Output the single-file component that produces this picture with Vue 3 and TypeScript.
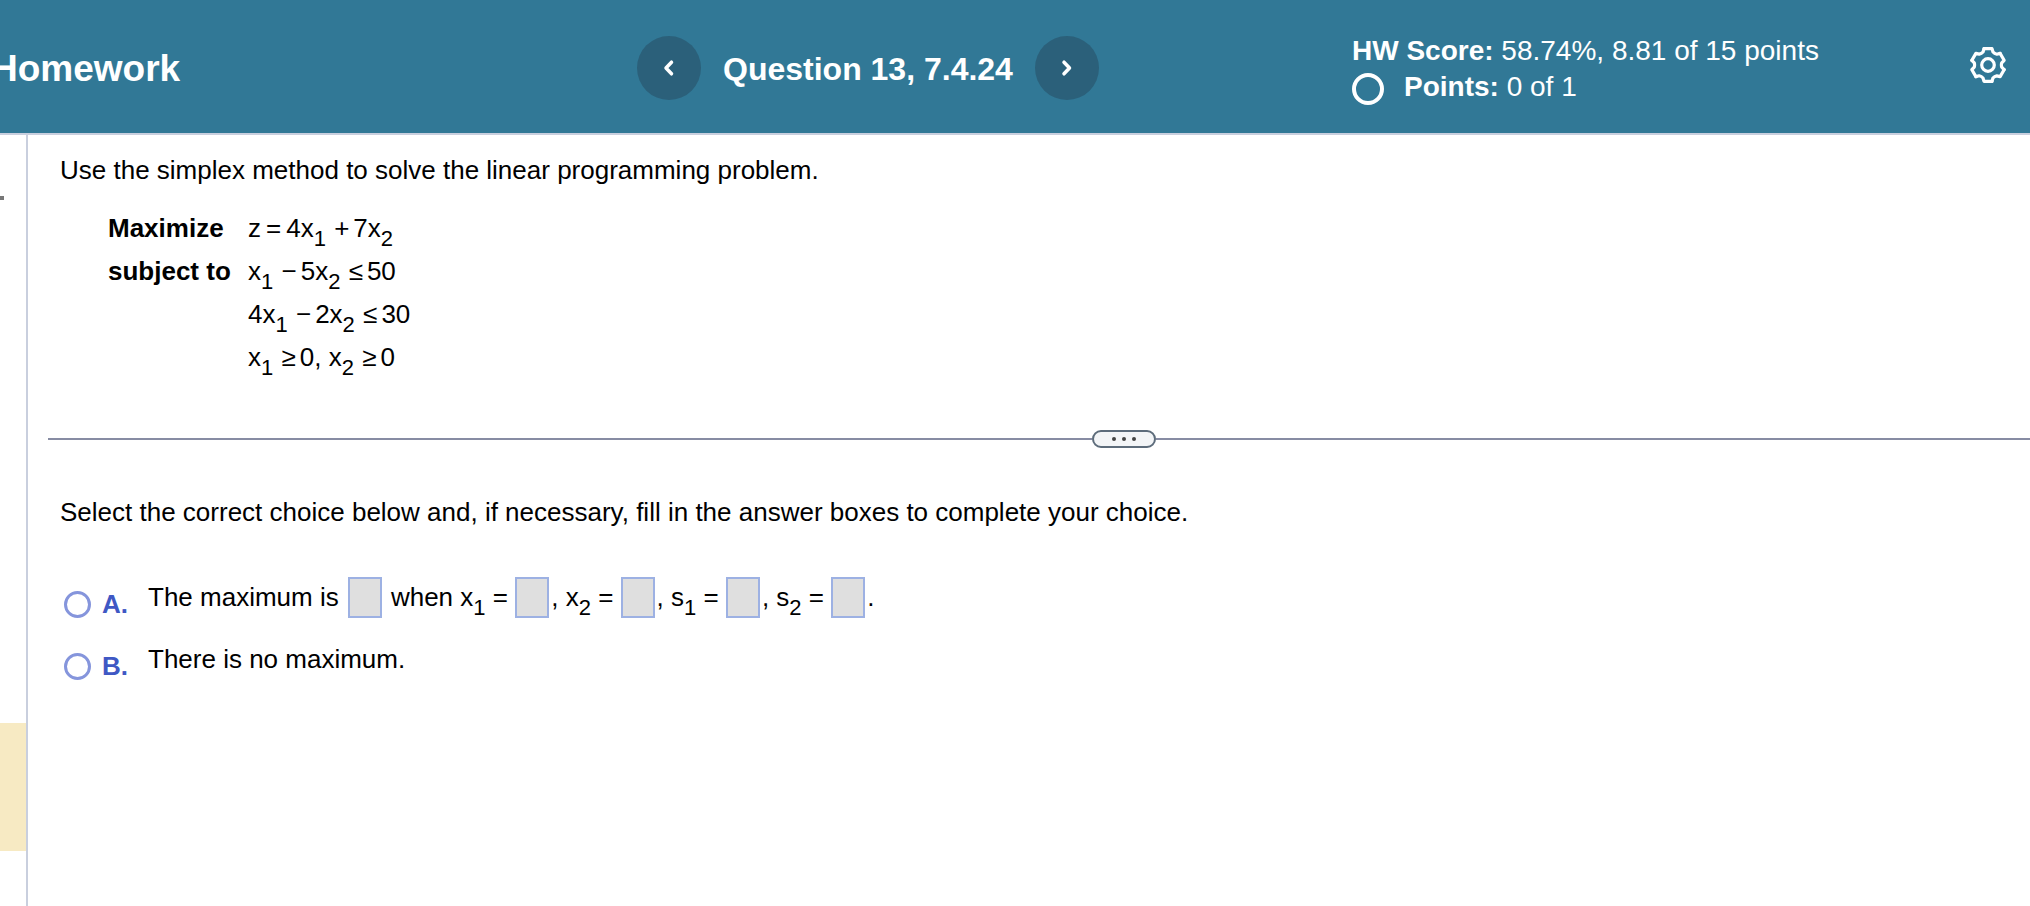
<script setup lang="ts">
import { ref } from 'vue'

interface Blank {
  lead: string
  symbol: string
  sub: string
}

const choice = ref<string>('')
const maximum = ref<string>('')
const blanks: Blank[] = [
  { lead: 'when ', symbol: 'x', sub: '1' },
  { lead: ', ', symbol: 'x', sub: '2' },
  { lead: ', ', symbol: 's', sub: '1' },
  { lead: ', ', symbol: 's', sub: '2' },
]
const values = ref<string[]>(['', '', '', ''])
const teeth: number[] = [0, 60, 120, 180, 240, 300]
</script>

<template>
  <div class="page">
    <header class="bar">
      <h1 class="title">Homework</h1>
      <nav class="pager" aria-label="Questions">
        <button class="round" type="button" aria-label="Previous question">
          <svg width="12" height="18" viewBox="0 0 12 18"><path d="M8.5 3.2 3 9l5.5 5.8" /></svg>
        </button>
        <h2 class="question">Question 13, 7.4.24</h2>
        <button class="round" type="button" aria-label="Next question">
          <svg width="12" height="18" viewBox="0 0 12 18"><path d="M3 3.2 8.5 9 3 14.8" /></svg>
        </button>
      </nav>
      <div class="score">
        <div><b>HW Score:</b> 58.74%, 8.81 of 15 points</div>
        <div class="points">
          <span class="ring"></span>
          <span><b>Points:</b> 0 of 1</span>
        </div>
      </div>
      <button class="gear" type="button" aria-label="Settings">
        <svg width="36" height="36" viewBox="-18 -18 36 36">
          <path
            v-for="angle in teeth"
            :key="angle"
            d="M-4 -16.3 L4 -16.3 L5 -13 Q6.5 -11.3 8.8 -10.8 L12.1 -11.6"
            :transform="`rotate(${angle})`"
          />
          <circle r="6.3" />
        </svg>
      </button>
    </header>

    <div class="body">
      <aside class="rail">
        <div class="dash"></div>
        <div class="current"></div>
      </aside>

      <main class="content">
        <p class="prompt">Use the simplex method to solve the linear programming problem.</p>

        <div class="problem">
          <b>Maximize</b>
          <span>z<i>=</i>4x<sub>1</sub> <i class="op">+</i>7x<sub>2</sub></span>
          <b>subject to</b>
          <span>x<sub>1</sub> <i class="op">−</i>5x<sub>2</sub> <i class="op">≤</i>50</span>
          <span class="cont">4x<sub>1</sub> <i class="op">−</i>2x<sub>2</sub> <i class="op">≤</i>30</span>
          <span class="cont">x<sub>1</sub> <i class="op">≥</i>0, x<sub>2</sub> <i class="op">≥</i>0</span>
        </div>

        <div class="divider">
          <span class="line left"></span>
          <button class="handle" type="button" aria-label="Resize panes">
            <span></span><span></span><span></span>
          </button>
          <span class="line right"></span>
        </div>

        <p class="prompt">
          Select the correct choice below and, if necessary, fill in the answer boxes to complete your choice.
        </p>

        <div class="choices">
          <div class="choice">
            <input id="choice-a" v-model="choice" type="radio" name="choice" value="A" />
            <label for="choice-a">A.</label>
            <div class="answer">
              The maximum is <input v-model="maximum" class="blank first" type="text" aria-label="Maximum" />
              <template v-for="(blank, i) in blanks" :key="i">
                <span class="term">{{ blank.lead }}{{ blank.symbol }}<sub>{{ blank.sub }}</sub> = </span>
                <input
                  v-model="values[i]"
                  class="blank"
                  type="text"
                  :aria-label="`${blank.symbol}${blank.sub}`"
                />
              </template><span class="term">.</span>
            </div>
          </div>
          <div class="choice">
            <input id="choice-b" v-model="choice" type="radio" name="choice" value="B" />
            <label for="choice-b">B.</label>
            <div class="answer">There is no maximum.</div>
          </div>
        </div>
      </main>
    </div>
  </div>
</template>

<style>
body {
  margin: 0;
  background: #fff;
}
</style>

<style scoped>
.page {
  display: flex;
  flex-direction: column;
  min-height: 100vh;
  overflow: hidden;
  font-family: "Liberation Sans", Arial, sans-serif;
  font-size: 26px;
  line-height: 30px;
  color: #000;
}

.bar {
  display: grid;
  grid-template-columns: 637fr 715fr 618fr 60fr;
  height: 133px;
  border-bottom: 2px solid #c9cfde;
  background: #317896;
  color: #fff;
}

button {
  padding: 0;
  cursor: pointer;
}

svg {
  display: block;
  fill: none;
  stroke: #fff;
  stroke-width: 3.5;
  stroke-linecap: round;
  stroke-linejoin: round;
}

.title {
  margin: 49px 0 0 -9px;
  font-size: 37px;
  line-height: 40px;
}

.pager {
  display: flex;
  align-items: center;
  gap: 22px;
  height: 64px;
  margin-top: 36px;
}

.round {
  display: flex;
  align-items: center;
  justify-content: center;
  width: 64px;
  height: 64px;
  border: 0;
  border-radius: 50%;
  background: #2b607a;
}

.question {
  margin: 0;
  padding-top: 2px;
  font-size: 32px;
  line-height: 36px;
}

.score {
  padding-top: 33px;
  font-size: 28px;
  line-height: 36px;
}

.points {
  display: flex;
  gap: 20px;
}

.ring {
  box-sizing: border-box;
  width: 32px;
  height: 32px;
  margin-top: 4px;
  border: 4px solid #fff;
  border-radius: 50%;
}

.gear {
  justify-self: start;
  align-self: start;
  margin-top: 47px;
  border: 0;
  background: none;
}

.gear svg {
  stroke-width: 3.2;
}

.body {
  display: flex;
  flex: 1;
}

.rail {
  flex: none;
  width: 26px;
  border-right: 2px solid #c9cfde;
}

.dash {
  width: 4px;
  height: 4px;
  margin-top: 61px;
  background: #777;
}

.current {
  height: 128px;
  margin-top: 523px;
  background: #f7eac3;
}

.content {
  flex: 1;
  padding: 20px 0 0 20px;
}

.prompt {
  margin: 0 12px;
}

.problem {
  display: grid;
  grid-template-columns: 140px 1fr;
  grid-auto-rows: 43px;
  margin: 22px 0 0 60px;
  line-height: 43px;
}

.cont {
  grid-column: 2;
}

i {
  margin: 0 5px;
  font-style: normal;
}

.op {
  margin: 0 4px 0 1px;
}

sub {
  font-size: 22px;
  line-height: 0;
  vertical-align: -9px;
}

.divider {
  display: flex;
  align-items: center;
  margin: 51px 0 49px;
}

.line {
  height: 2px;
  background: #878ca3;
}

.left {
  flex: 1044;
}

.right {
  flex: 874;
}

.handle {
  display: flex;
  align-items: center;
  justify-content: center;
  gap: 6px;
  box-sizing: border-box;
  width: 64px;
  height: 18px;
  border: 2px solid #5d6c7b;
  border-radius: 9px;
  background: #f3f5f7;
}

.handle span {
  width: 4px;
  height: 4px;
  border-radius: 50%;
  background: #444;
}

.choices {
  margin: 48px 0 0 16px;
}

.choice {
  display: grid;
  grid-template-columns: 38px 46px 1fr;
  height: 62px;
}

.choice input[type="radio"] {
  appearance: none;
  box-sizing: border-box;
  width: 27px;
  height: 27px;
  margin: 16px 0 0;
  border: 3px solid #8595dc;
  border-radius: 50%;
  background: #fff;
}

.choice input[type="radio"]:checked {
  background: #3f58c4;
  box-shadow: inset 0 0 0 4px #fff;
}

.choice label {
  padding-top: 14px;
  font-weight: bold;
  color: #3f58c4;
}

.answer {
  padding-top: 7px;
}

.blank {
  box-sizing: border-box;
  width: 34px;
  height: 41px;
  margin: -10px 2px -10px 0;
  padding: 0 4px;
  border: 2px solid #9db1e3;
  border-radius: 0;
  background: #dfdfdf;
  font: inherit;
  vertical-align: baseline;
}

.first {
  margin-right: 9px;
  margin-left: 2px;
}
</style>
